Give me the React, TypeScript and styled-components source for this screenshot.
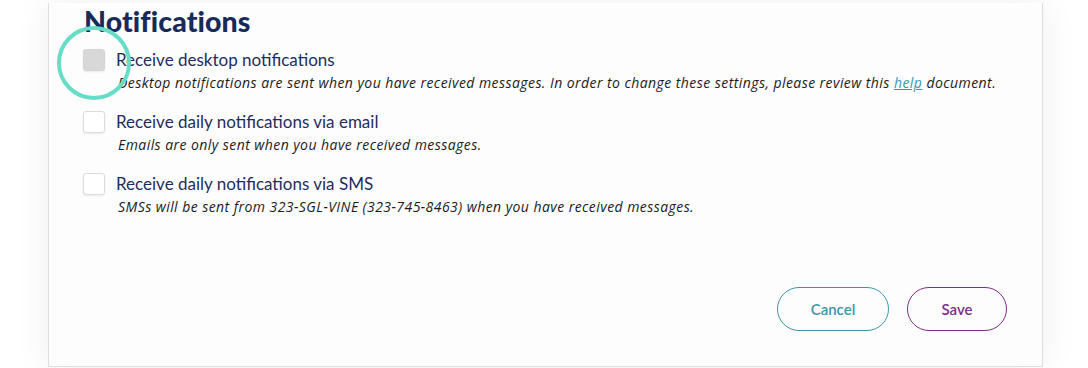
import React from "react";
import styled, { createGlobalStyle } from "styled-components";

const Global = createGlobalStyle`
  html, body { margin: 0; padding: 0; background: #ffffff; }
  body { font-family: "Lato", "Open Sans", sans-serif; }
  #root { width: 1088px; height: 368px; overflow: hidden; }
`;

const Page = styled.div`
  width: 1088px;
  height: 368px;
  box-sizing: border-box;
  padding: 0 45px 1px 48px;
  display: flex;
  flex-direction: column;
  justify-content: flex-end;
`;

const Card = styled.section`
  position: relative;
  background: #fdfdfd;
  border: 1px solid #dedede;
  border-top: none;
  box-shadow: 0 0 34px rgba(0, 0, 0, 0.07);
  padding: 0 35px 35px 34px;
  display: flex;
  flex-direction: column;
`;

const Title = styled.h2`
  margin: 0;
  padding-top: 1px;
  padding-left: 1px;
  font-family: "Lato", sans-serif;
  font-weight: 900;
  font-size: 28.5px;
  line-height: 34px;
  color: #172a5a;
  letter-spacing: 0.1px;
`;

const List = styled.div`
  margin-top: 11px;
  display: flex;
  flex-direction: column;
  gap: 20px;
`;

const Row = styled.div`
  display: grid;
  grid-template-columns: 22px 1fr;
  column-gap: 11px;
`;

const Box = styled.span<{ $disabled?: boolean }>`
  width: 22px;
  height: 22px;
  box-sizing: border-box;
  border-radius: 3px;
  background: ${(p) => (p.$disabled ? "#d8d8d8" : "#ffffff")};
  border: 1px solid ${(p) => (p.$disabled ? "#d4d4d4" : "#dcdcdc")};
  box-shadow: 0 1px 2px rgba(0, 0, 0, 0.08);
`;

const Texts = styled.div`
  display: flex;
  flex-direction: column;
`;

const Label = styled.div`
  font-family: "Lato", sans-serif;
  font-size: 17px;
  line-height: 22px;
  color: #1f2d5c;
`;

const Desc = styled.div`
  margin-top: 3px;
  padding-left: 2px;
  font-family: "Open Sans", sans-serif;
  font-style: italic;
  font-size: 14px;
  letter-spacing: 0.44px;
  line-height: 17px;
  color: #1b1b1b;
`;

const Link = styled.a`
  color: #3a97a8;
  text-decoration: underline;
`;

const Highlight = styled.span`
  position: absolute;
  left: 8px;
  top: 23px;
  width: 74px;
  height: 74px;
  box-sizing: border-box;
  border: 4px solid #67dcc6;
  border-radius: 50%;
  pointer-events: none;
`;

const Actions = styled.div`
  margin-top: 72px;
  display: flex;
  justify-content: flex-end;
  gap: 18px;
`;

const Button = styled.button<{ $tone: string; $w: number }>`
  width: ${(p) => p.$w}px;
  height: 44px;
  border-radius: 22px;
  background: transparent;
  border: 1.5px solid ${(p) => p.$tone};
  color: ${(p) => p.$tone};
  font-family: "Lato", sans-serif;
  font-size: 15px;
  font-weight: 600;
  cursor: pointer;
`;

export default function App() {
  return (
    <>
      <Global />
      <Page>
        <Card>
          <Title>Notifications</Title>
          <List>
            <Row>
              <Box $disabled />
              <Texts>
                <Label>Receive desktop notifications</Label>
                <Desc>
                  Desktop notifications are sent when you have received messages. In order to change these
                  settings, please review this <Link href="#">help</Link> document.
                </Desc>
              </Texts>
            </Row>
            <Row>
              <Box />
              <Texts>
                <Label>Receive daily notifications via email</Label>
                <Desc>Emails are only sent when you have received messages.</Desc>
              </Texts>
            </Row>
            <Row>
              <Box />
              <Texts>
                <Label>Receive daily notifications via SMS</Label>
                <Desc>SMSs will be sent from 323-SGL-VINE (323-745-8463) when you have received messages.</Desc>
              </Texts>
            </Row>
          </List>
          <Actions>
            <Button $tone="#3a97a8" $w={112}>Cancel</Button>
            <Button $tone="#7b2d84" $w={100}>Save</Button>
          </Actions>
          <Highlight />
        </Card>
      </Page>
    </>
  );
}
